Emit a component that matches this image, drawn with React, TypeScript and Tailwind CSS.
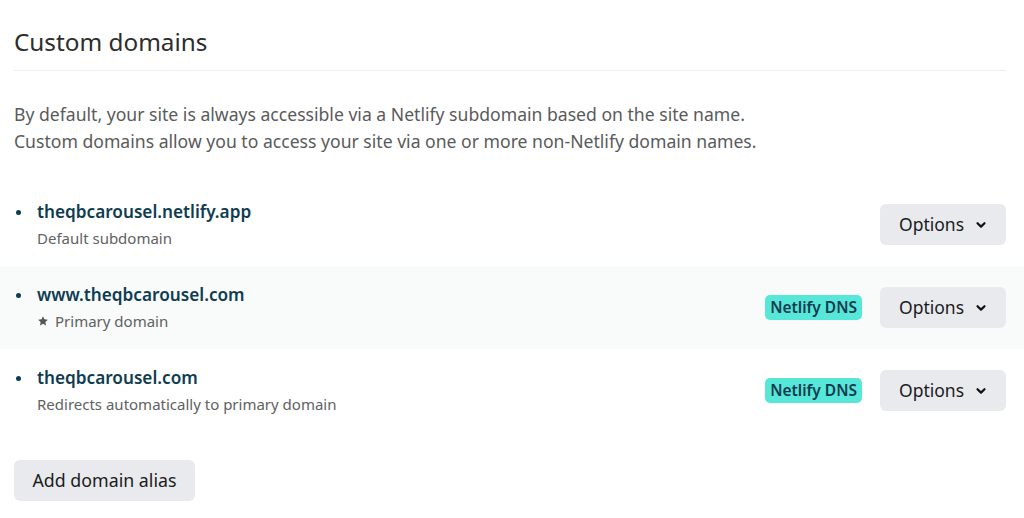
import React from "react";

interface Domain {
  name: string;
  note: string;
  primary?: boolean;
  dns?: boolean;
  shaded?: boolean;
}

const domains: Domain[] = [
  { name: "theqbcarousel.netlify.app", note: "Default subdomain" },
  { name: "www.theqbcarousel.com", note: "Primary domain", primary: true, dns: true, shaded: true },
  { name: "theqbcarousel.com", note: "Redirects automatically to primary domain", dns: true },
];

function Chevron() {
  return (
    <svg width="12" height="12" viewBox="0 0 12 12" className="ml-[11px]">
      <path d="M2.5 4.2 L6 7.6 L9.5 4.2" fill="none" stroke="#111" strokeWidth="2.2" strokeLinecap="round" strokeLinejoin="round" />
    </svg>
  );
}

function Star() {
  return (
    <svg width="12" height="12" viewBox="0 0 24 24" className="mr-[6px]">
      <path d="M12 2.5l2.9 6.2 6.8.8-5 4.7 1.3 6.7L12 17.6l-6 3.3 1.3-6.7-5-4.7 6.8-.8z" fill="#555" />
    </svg>
  );
}

export default function App() {
  return (
    <div className="bg-white w-[1024px] h-[518px] overflow-hidden font-['Noto_Sans',sans-serif]">
      <div className="pl-[14px] pr-[18px] pt-[24px]">
        <h2 className="text-[24.3px] leading-[36px] text-[#2d2d2d]">Custom domains</h2>
        <div className="mt-[10px] border-b border-[#eeefef]" />
        <p className="mt-[30px] text-[17.6px] leading-[27px] text-[#5a5a5a]">
          By default, your site is always accessible via a Netlify subdomain based on the site name.
          <br />
          Custom domains allow you to access your site via one or more non-Netlify domain names.
        </p>
      </div>

      <div className="mt-[28px]">
        {domains.map((d) => (
          <div
            key={d.name}
            className={`flex items-center h-[83px] pl-[14px] pr-[18px] ${d.shaded ? "bg-[#f9fafa]" : "bg-white"}`}
          >
            <div className="flex-1 flex">
              <span className="mt-[11px] ml-[2px] w-[5px] h-[5px] rounded-full bg-[#0e3c51]" />
              <div className="ml-[16px]">
                <div className="text-[17.2px] leading-[26px] font-semibold text-[#0e3c51]">{d.name}</div>
                <div className="flex items-center text-[15px] leading-[26px] text-[#616161]">
                  {d.primary && <Star />}
                  {d.note}
                </div>
              </div>
            </div>
            {d.dns && (
              <span className="mr-[18px] px-[5px] h-[25px] flex items-center rounded-[5px] bg-[#56e7d8] text-[15.5px] font-semibold text-[#0d3b4f]">
                Netlify DNS
              </span>
            )}
            <button className="flex items-center justify-center w-[126px] h-[41px] rounded-[6px] bg-[#e8eaed] text-[17.5px] text-[#1b1b1b]">
              Options
              <Chevron />
            </button>
          </div>
        ))}
      </div>

      <div className="pl-[14px] mt-[28px]">
        <button className="w-[181px] h-[41px] rounded-[6px] bg-[#e8eaed] text-[17.8px] text-[#1b1b1b]">
          Add domain alias
        </button>
      </div>
    </div>
  );
}
